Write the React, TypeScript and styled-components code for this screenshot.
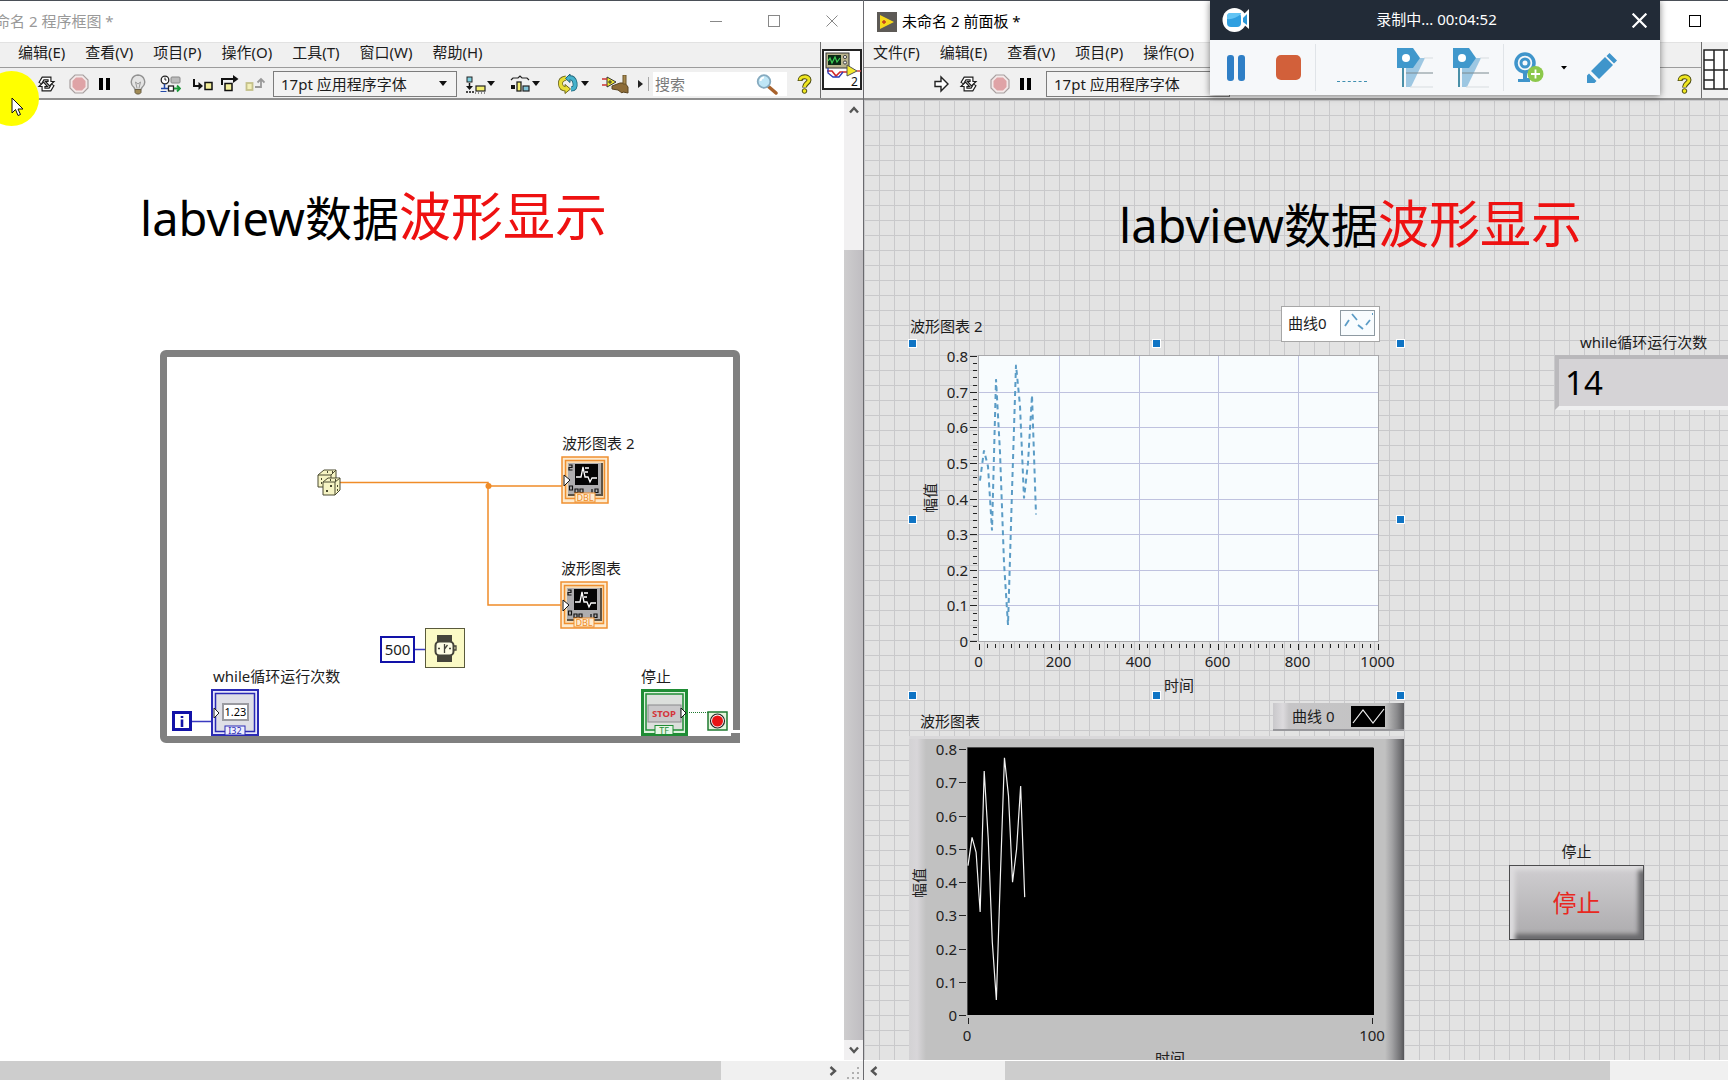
import React from "react";
import styled, { createGlobalStyle, css } from "styled-components";

const GlobalStyle = createGlobalStyle`
  * { box-sizing: border-box; }
  html, body, #root { height: 100%; margin: 0; }
  body {
    overflow: hidden;
    background: #f0f0f0;
    color: #1c1c1c;
    font: 15px/20px "Noto Sans", "Noto Sans CJK SC", sans-serif;
  }
  button, input, select { font: inherit; color: inherit; }
  svg { display: block; flex: none; }
  svg text { font-family: "Noto Sans", "Noto Sans CJK SC", sans-serif; }
`;

/* ---------- window frame ---------- */

const Desktop = styled.div`
  position: relative;
  display: grid;
  grid-template-columns: minmax(0, 1fr) minmax(0, 1fr);
  height: 100vh;
  overflow: hidden;
`;

const Window = styled.section<{ $edge?: boolean }>`
  display: grid;
  grid-template-rows: 42px 58px minmax(0, 1fr) 20px;
  min-width: 0;
  border-right: ${(p) => (p.$edge ? "1px solid #6a6a6e" : "0")};
`;

const TitleBar = styled.header`
  display: flex;
  align-items: center;
  border-top: 1px solid #4a4f57;
  background: #fff;
  overflow: hidden;
`;

const TitleText = styled.h1<{ $muted?: boolean }>`
  flex: 1;
  margin: 0 0 0 ${(p) => (p.$muted ? "-5px" : "5px")};
  padding-bottom: 2px;
  font-size: 15px;
  font-weight: 400;
  line-height: 20px;
  white-space: nowrap;
  color: ${(p) => (p.$muted ? "#999" : "#000")};
`;

const AppIcon = styled.span`
  margin-left: 13px;
`;

const FrameButton = styled.button<{ $muted?: boolean }>`
  display: grid;
  place-items: center;
  width: 58px;
  height: 42px;
  padding: 0 0 2px;
  border: 0;
  background: none;
  color: ${(p) => (p.$muted ? "#888" : "#000")};
`;

const FrameButtons = styled.div<{ $inset?: boolean }>`
  display: flex;
  margin-right: ${(p) => (p.$inset ? "4px" : "2px")};
`;

const Head = styled.div<{ $pane: number }>`
  display: grid;
  grid-template-columns: minmax(0, 1fr) ${(p) => p.$pane}px;
  border-bottom: 2px solid #8f8f8f;
  background: #f0f0f0;
`;

const HeadBars = styled.div`
  display: grid;
  grid-template-rows: 26px 30px;
  min-width: 0;
`;

const MenuBar = styled.nav<{ $start: number }>`
  display: flex;
  align-items: flex-start;
  gap: 20px;
  padding-left: ${(p) => p.$start}px;
  border-top: 1px solid #e2e2e2;
  border-bottom: 1px solid #9c9c9c;
  overflow: hidden;
`;

const MenuItem = styled.button`
  flex: none;
  padding: 0;
  border: 0;
  background: none;
  line-height: 18px;
  white-space: nowrap;
`;

const ToolBar = styled.div<{ $start: number }>`
  display: flex;
  align-items: center;
  padding: 2px 0 0 ${(p) => p.$start}px;
  overflow: hidden;
`;

const ToolButton = styled.button<{ $gap: number }>`
  flex: none;
  margin: 0 0 0 ${(p) => p.$gap}px;
  padding: 0;
  border: 0;
  background: none;
`;

const Spacer = styled.div`
  flex: 1;
`;

const FontBox = styled.label<{ $gap: number }>`
  position: relative;
  flex: none;
  width: 184px;
  margin-left: ${(p) => p.$gap}px;
`;

const FontSelect = styled.select`
  display: block;
  width: 100%;
  height: 26px;
  padding: 0 7px 1px;
  border: 1px solid #7c7c7c;
  border-radius: 0;
  outline: 0;
  background: #f3f3f3;
  appearance: none;
`;

const FontCaret = styled.span`
  position: absolute;
  right: 10px;
  top: 10px;
  pointer-events: none;
`;

const SearchMark = styled.span`
  margin-left: 9px;
  padding-right: 4px;
  border-right: 1px solid #a8a8a8;
`;

const SearchBox = styled.label`
  display: flex;
  flex: none;
  align-items: center;
  width: 134px;
  height: 24px;
  margin-left: 4px;
  padding: 0 9px 0 2px;
  background: #fff;
`;

const SearchInput = styled.input`
  flex: 1;
  min-width: 0;
  padding: 0;
  border: 0;
  outline: 0;
  background: none;
  &::placeholder { color: #7a7a7a; opacity: 1; }
`;

const Pane = styled.div`
  display: flex;
  align-items: flex-start;
  padding: 7px 0 0 1px;
  border-left: 1px solid #6e6e6e;
  overflow: hidden;
`;

/* ---------- work areas ---------- */

const Work = styled.div<{ $bar?: boolean }>`
  display: grid;
  grid-template-columns: minmax(0, 1fr) ${(p) => (p.$bar ? "19px" : "")};
  min-height: 0;
`;

const canvasBase = css`
  position: relative;
  overflow: hidden;
`;

const Diagram = styled.main`
  ${canvasBase}
  background: #fff;
`;

const Panel = styled.main`
  ${canvasBase}
  background-color: #e3e3e3;
  background-image:
    linear-gradient(#c4c4c4, #c4c4c4),
    linear-gradient(to right, #c9c9cb 1px, transparent 1px),
    linear-gradient(to bottom, #c9c9cb 1px, transparent 1px);
  background-size: 100% 1px, 15px 15px, 15px 15px;
  background-position: 0 75px, 0 0, 0 0;
  background-repeat: no-repeat, repeat, repeat;
`;

const Item = styled.div<{ $x: number; $y: number }>`
  position: absolute;
  left: ${(p) => p.$x}px;
  top: ${(p) => p.$y}px;
`;

const Caption = styled.span`
  display: block;
  line-height: 20px;
  white-space: nowrap;
`;

const Headline = styled.h2<{ $accent: number }>`
  margin: 0;
  font-size: 47px;
  font-weight: 400;
  line-height: 60px;
  white-space: nowrap;
  color: #000;
  em {
    font-style: normal;
    font-size: ${(p) => p.$accent}px;
    color: #ee1111;
  }
`;

const Loop = styled.div`
  width: 580px;
  height: 393px;
  border: 7px solid #808080;
  border-radius: 6px;
`;

const Constant = styled.div`
  width: 35px;
  height: 27px;
  border: 2px solid #1212a8;
  background: #fff;
  line-height: 22px;
  text-align: center;
`;

/* ---------- scroll bars ---------- */

const VBar = styled.div`
  display: grid;
  grid-template-rows: 20px 130px minmax(0, 1fr) 20px;
  justify-items: center;
  align-items: center;
  background: #f1f0f1;
`;

const VThumb = styled.div`
  grid-row: 3;
  align-self: stretch;
  width: 100%;
  background: linear-gradient(to right, #cecdce, #bfbdc1);
`;

const VEnd = styled.span`
  grid-row: 4;
`;

const HBar = styled.div`
  display: flex;
  align-items: center;
  border-top: 1px solid #fff;
  background: #f0f0f0;
`;

const HThumb = styled.div<{ $share: number }>`
  flex: 0 0 ${(p) => p.$share}%;
  align-self: stretch;
  background: #cdcdcd;
`;

const ArrowCell = styled.span<{ $w: number }>`
  display: grid;
  place-items: center;
  flex: 0 0 ${(p) => p.$w}px;
`;

/* ---------- front panel controls ---------- */

const Legend = styled.div<{ $flat?: boolean }>`
  display: flex;
  align-items: center;
  justify-content: space-between;
  ${(p) =>
    p.$flat
      ? css`
          width: 99px;
          height: 36px;
          padding: 0 4px 2px 6px;
          border: 1px solid #a6a6a6;
          background: #fff;
        `
      : css`
          width: 131px;
          height: 28px;
          padding: 0 19px 0 19px;
          border-bottom: 2px solid #98989c;
          background: linear-gradient(to right, #c9c8cb, #dcdadd 10px, #c6c5c7 16px, #c3c3c3 112px, #8a8a8c 124px, #5f5f62);
        `}
`;

const Bezel = styled.div`
  width: 495px;
  height: 350px;
  border-top: 3px solid #d9d8da;
  background: linear-gradient(to right, #d3d2d4, #d8d6d9 8px, #c1c1c1 17px, #c1c1c1 476px, #a2a2a4 483px, #6d6d70 492px, #555558);
`;

const CountLabel = styled.label`
  display: block;
  padding-left: 25px;
  line-height: 26px;
  white-space: nowrap;
`;

const CountField = styled.input`
  display: block;
  width: 220px;
  height: 55px;
  padding: 0 0 0 6px;
  border: 4px solid;
  border-color: #b9b8bb #e9e9e9 #efeff0 #bab9bc;
  border-radius: 0;
  outline: 0;
  background: #d5d3d6;
  font-size: 33px;
  color: #000;
`;

const StopGroup = styled.div`
  display: grid;
  justify-items: center;
  gap: 4px;
`;

const StopButton = styled.button`
  width: 135px;
  height: 75px;
  padding: 0;
  border: 1px solid #4c4c4e;
  border-radius: 0;
  background: linear-gradient(#d0ced1, #acabad);
  box-shadow: inset 5px 4px 4px #dddcde, inset -5px -5px 4px #6b6b6e;
  font-size: 24px;
  color: #e8281f;
`;

/* ---------- recorder ---------- */

const Recorder = styled.aside`
  position: absolute;
  top: 0;
  right: 68px;
  width: 450px;
  background: #f6f8fa;
  box-shadow: 0 1px 7px rgba(0, 0, 0, 0.5);
`;

const RecorderHead = styled.header`
  display: grid;
  grid-template-columns: 28px 1fr 15px;
  align-items: center;
  height: 40px;
  padding: 0 13px 0 12px;
  background: #222b37;
  color: #fff;
`;

const RecorderTime = styled.span`
  padding: 0 9px 2px 0;
  text-align: center;
`;

const RecorderBody = styled.div`
  display: flex;
  align-items: center;
  height: 55px;
  padding-left: 17px;
`;

const RecButton = styled.button<{ $gap: number }>`
  flex: none;
  margin: 0 0 0 ${(p) => p.$gap}px;
  padding: 0;
  border: 0;
  background: none;
`;

const RecRule = styled.span<{ $gap: number }>`
  width: 1px;
  height: 47px;
  margin-left: ${(p) => p.$gap}px;
  background: #e0e4e8;
`;

const Level = styled.span`
  align-self: flex-end;
  width: 30px;
  margin: 0 0 13px 21px;
  border-bottom: 1px dashed #3f8fb0;
`;

const Highlight = styled.div`
  position: absolute;
  left: -16px;
  top: 71px;
  width: 55px;
  height: 55px;
  border-radius: 50%;
  background: #ffff00;
`;

const Pointer = styled.div`
  position: absolute;
  left: 11px;
  top: 97px;
`;

/* ---------- icons ---------- */

const Caret = () => (
  <svg width="8" height="5"><path d="M0 0h8L4 5z" fill="#111" /></svg>
);

const ContinuousIcon = () => (
  <svg width="21" height="18" viewBox="0 0 21 18">
    <g fill="none" stroke="#1c1c1c" strokeWidth="4">
      <path d="M4 8.500L7 3.500h6.500V7" /><path d="M17 9.500L14 14.500H7.500V11" />
    </g>
    <g fill="#fff" stroke="#1c1c1c" strokeWidth="1.200">
      <path d="M9.500 6.500h8.500L13.500 11z" /><path d="M3 11.500h8.500L7.500 7z" />
    </g>
    <g fill="none" stroke="#fff" strokeWidth="1.700">
      <path d="M4.500 7.700L7 3.500h6.500V8" /><path d="M16.500 10.300L14 14.500H7.500V10" />
    </g>
  </svg>
);

const RunIcon = () => (
  <svg width="15" height="18" viewBox="0 0 15 18"><path d="M1 6.500h6V2l7 7-7 7v-4.500H1z" fill="#fff" stroke="#222" strokeWidth="1.400" /></svg>
);

const AbortIcon = () => (
  <svg width="20" height="20" viewBox="0 0 20 20">
    <path d="M6 1h8l5 5v8l-5 5H6l-5-5V6z" fill="#f3e9e9" stroke="#a8a0a0" strokeWidth="1.200" />
    <path d="M7 3.500h6L16.500 7v6L13 16.500H7L3.500 13V7z" fill="#dfa3a6" />
  </svg>
);

const PauseIcon = () => (
  <svg width="14" height="14"><path d="M1 1h4v12H1zM8 1h4v12H8z" fill="#000" /></svg>
);

const BulbIcon = () => (
  <svg width="16" height="21" viewBox="0 0 16 21">
    <path d="M8 1a7 7 0 0 0-4 12.500l1 2h6l1-2A7 7 0 0 0 8 1z" fill="#e4e4e4" stroke="#929292" strokeWidth="1.400" />
    <path d="M5.500 8l1.500 6M10.500 8L9 14M5.500 8l2.500 2 2.500-2" fill="none" stroke="#999" />
    <path d="M5 15.500h6v3L9.500 20h-3L5 18.500z" fill="#a08a55" stroke="#6a6048" />
  </svg>
);

const RetainIcon = () => (
  <svg width="21" height="18" viewBox="0 0 21 18" fill="none" stroke="#222">
    <circle cx="5" cy="5" r="3.800" fill="#fff" strokeWidth="1.300" /><path d="M5 2.500V5h1.500" />
    <rect x="11" y="2" width="9" height="6" rx="1" fill="#bbb" stroke="#888" />
    <path d="M4.500 9v4M1 13.500h7" stroke="#2248a8" strokeWidth="1.500" /><path d="M0.500 16.500h6" stroke="#2248a8" />
    <rect x="8.500" y="11" width="5" height="5" fill="#fff" strokeWidth="1.300" />
    <path d="M14 13.500h6M17 10.500l3 3-3 3" stroke="#1b9a3a" strokeWidth="1.800" />
  </svg>
);

const StepIntoIcon = () => (
  <svg width="21" height="18" viewBox="0 0 21 18" fill="none" stroke="#111" strokeWidth="2">
    <path d="M2 4v7h6" /><path d="M6.500 7l4.500 4-4.500 4z" fill="#111" stroke="none" /><rect x="13" y="7.500" width="7" height="7" fill="#f4ef9a" strokeWidth="1.500" />
  </svg>
);

const StepOverIcon = () => (
  <svg width="19" height="18" viewBox="0 0 19 18" fill="none" stroke="#111" strokeWidth="2">
    <path d="M2 10V4h12" /><path d="M13 0l5.500 4L13 8z" fill="#111" stroke="none" /><rect x="5" y="8.500" width="7" height="7" fill="#f4ef9a" strokeWidth="1.500" />
  </svg>
);

const StepOutIcon = () => (
  <svg width="20" height="18" viewBox="0 0 20 18" fill="none" stroke="#999" strokeWidth="1.800">
    <rect x="1.500" y="8" width="6" height="7" fill="#f2efb8" stroke="#c4c08a" /><path d="M10 12h6V5M12.500 7.500L16 4l3.500 3.500" />
  </svg>
);

const AlignIcon = () => (
  <svg width="30" height="19" viewBox="0 0 30 19">
    <rect x="1" y="2" width="5" height="5" fill="#7fd0e0" stroke="#222" />
    <path d="M3.500 8v5" stroke="#111" strokeWidth="1.500" /><path d="M0 11h7l-3.500 4z" fill="#111" /><path d="M0 17h8" stroke="#111" strokeWidth="1.500" strokeDasharray="2 1" />
    <rect x="10" y="11" width="9" height="5" fill="#f4ef70" stroke="#222" strokeWidth="1.200" />
    <path d="M9 18h12" stroke="#222" strokeDasharray="1 2" /><path d="M21 6h8l-4 5z" fill="#111" />
  </svg>
);

const DistributeIcon = () => (
  <svg width="30" height="19" viewBox="0 0 30 19">
    <path d="M1 5l2-2h5l2-2 2 2h5l2 2" fill="none" stroke="#222" strokeWidth="1.200" />
    <path d="M1 10h4v4H1z" fill="#111" />
    <rect x="7" y="7" width="4" height="9" fill="#f4ef70" stroke="#222" strokeWidth="1.300" />
    <rect x="13" y="11" width="6" height="5" fill="#7fc3d8" stroke="#222" strokeWidth="1.200" /><path d="M22 6h8l-4 5z" fill="#111" />
  </svg>
);

const ReorderIcon = () => (
  <svg width="32" height="20" viewBox="0 0 32 20">
    <g fill="none" stroke="#6b6620" strokeWidth="5"><path d="M9 4Q3 5 3.500 10T9 15" /></g>
    <path d="M8 10.500l5.500 4.500L8 19.500z" fill="#e8de36" stroke="#6b6620" />
    <path d="M9.500 4Q3 5 3.500 10T9.500 15" fill="none" stroke="#e8de36" strokeWidth="3.400" />
    <g fill="none" stroke="#1e6478" strokeWidth="5"><path d="M12 4Q17 3 18 9T14 15" /></g>
    <path d="M13 0L8.500 4.500l4.500 4z" fill="#46b2cc" stroke="#1e6478" />
    <path d="M12 4Q17 3 18 9T14 15" fill="none" stroke="#46b2cc" strokeWidth="3.400" />
    <path d="M24 7h8l-4 5z" fill="#111" />
  </svg>
);

const CleanIcon = () => (
  <svg width="27" height="19" viewBox="0 0 27 19">
    <path d="M10 11l8-3h5l3 4v6l-5-1-1 1-4-3-6-1z" fill="#8d6c38" stroke="#5a4420" />
    <path d="M21 0h3v9h-3z" fill="#a88a50" stroke="#6b5528" />
    <path d="M5 2l9 5-9 5z" fill="#f2ea30" stroke="#333" /><path d="M0 4h5M0 10h5" stroke="#c33" strokeWidth="1.500" />
    <path d="M8 5v4M6 7h4" stroke="#333" />
  </svg>
);

const LensIcon = () => (
  <svg width="22" height="21" viewBox="0 0 22 21">
    <path d="M13 13l7 6" stroke="#a8622c" strokeWidth="3.500" strokeLinecap="round" />
    <circle cx="8" cy="7.500" r="6.300" fill="#bfe6f6" stroke="#86aabf" strokeWidth="1.800" />
    <path d="M4.500 7A4 4 0 0 1 8 3.500" stroke="#fff" strokeWidth="1.800" fill="none" />
  </svg>
);

const HelpIcon = () => (
  <svg width="15" height="20" viewBox="0 0 15 20">
    <path d="M3 7C3 1.500 12 1.500 12 6c0 3-4.500 3.500-4.500 7.500" fill="none" stroke="#4c4a10" strokeWidth="5" />
    <path d="M3 6.200C3 1.800 12 1.800 12 6c0 3-4.500 3.500-4.500 7" fill="none" stroke="#efe620" strokeWidth="3" />
    <circle cx="7.500" cy="17" r="2.300" fill="#efe620" stroke="#4c4a10" />
  </svg>
);

const ViIcon = () => (
  <svg width="40" height="41" viewBox="0 0 40 41">
    <rect x="1" y="1" width="38" height="39" fill="#fff" stroke="#222" strokeWidth="2" />
    <rect x="4" y="4" width="23" height="15" fill="#b9b38c" stroke="#333" />
    <rect x="6" y="6" width="13" height="10" fill="#0b2a14" />
    <path d="M6 12l2-3 2 5 3-6 2 5 3-4" fill="none" stroke="#3ecb55" strokeWidth="1.200" />
    <circle cx="23" cy="8" r="1.600" fill="#eee" stroke="#444" /><circle cx="23" cy="13.500" r="1.600" fill="#eee" stroke="#444" />
    <path d="M5 22h5l4 5 4-4h9" fill="none" stroke="#d02828" strokeWidth="1.600" />
    <path d="M6 19v5l5 4h6l4-5" fill="none" stroke="#2a3ab8" strokeWidth="1.300" />
    <path d="M25 16l10 6-10 5z" fill="#f4ea2a" stroke="#555" /><path d="M35 22h4" stroke="#c44" strokeWidth="1.500" />
    <text x="29" y="37" fontSize="12" fill="#111">2</text>
  </svg>
);

const ConnectorIcon = () => (
  <svg width="40" height="41" viewBox="0 0 40 41" fill="#fff" stroke="#222" strokeWidth="1.500">
    <rect x="1" y="1" width="38" height="39" /><path d="M11 1v39M21 1v39M30 1v39M1 11h10M1 21h38M1 31h10M30 11h10M30 31h10" />
  </svg>
);

const LabviewIcon = () => (
  <svg width="20" height="20"><rect width="20" height="20" fill="#5d5a56" /><path d="M3 3l14 7-14 7z" fill="#f6d91c" /><path d="M5 10h4M7 8v4" stroke="#c23a1c" strokeWidth="1.400" /></svg>
);

const Chevron = ({ turn }: { turn: number }) => (
  <svg width="12" height="12" viewBox="0 0 12 12"><path d="M2 8.500L6 4l4 4.500" transform={`rotate(${turn} 6 6)`} fill="none" stroke="#555" strokeWidth="2.400" /></svg>
);

const CloseIcon = ({ size, weight }: { size: number; weight: number }) => (
  <svg width={size} height={size} viewBox="0 0 12 12"><path d="M0.500 0.500l11 11M11.500 0.500l-11 11" stroke="currentColor" strokeWidth={weight} /></svg>
);

const MaxIcon = () => (
  <svg width="12" height="12"><rect x="0.500" y="0.500" width="11" height="11" fill="none" stroke="currentColor" /></svg>
);

const MinIcon = () => (
  <svg width="12" height="12"><path d="M0 6.500h12" stroke="currentColor" /></svg>
);

const CameraLogo = () => (
  <svg width="28" height="26" viewBox="0 0 28 26">
    <circle cx="12.500" cy="13" r="12" fill="#fff" /><path d="M20 9l7-7v20l-7-6z" fill="#fff" />
    <rect x="5" y="6" width="14" height="14" rx="4" fill="#2f9fe0" /><path d="M5 12q7 1 14-5v-1H8q-3 0-3 4z" fill="#62c4f4" />
    <path d="M21 11l4-4v11l-4-3z" fill="#2a97d8" />
  </svg>
);

const MarkerIcon = () => (
  <svg width="37" height="40" viewBox="0 0 37 40">
    <path d="M14 10h14L14 39H9V20z" fill="#9dc7e2" /><path d="M0 0h16l7 10-7 10H0z" fill="#4098cc" />
    <circle cx="9" cy="10" r="4" fill="#fff" /><path d="M6 20v19" stroke="#4a90a8" strokeWidth="2" />
    <path d="M9 25h27" stroke="#7a8a90" /><path d="M27 10h9M13 39h23" stroke="#d8dde0" />
  </svg>
);

const WebcamIcon = () => (
  <svg width="30" height="31" viewBox="0 0 30 31">
    <circle cx="11" cy="11" r="9" fill="none" stroke="#3f95cb" strokeWidth="3.500" /><circle cx="11" cy="11" r="4" fill="none" stroke="#3f95cb" strokeWidth="3" />
    <path d="M9 21h4v5h3v4H4v-3h5z" fill="#3f95cb" /><circle cx="21.500" cy="22" r="8" fill="#8cc84b" />
    <path d="M21.500 17.500v9M17 22h9" stroke="#fff" strokeWidth="1.800" />
  </svg>
);

const PencilIcon = () => (
  <svg width="30" height="30" viewBox="0 0 30 30" fill="#3f95cb">
    <path d="M0 22.500V30h7.500l2-2-7.500-7.500zM4 18L18 4l8 8-14 14zM19.500 3l3-3L30 7.500l-3 3z" />
  </svg>
);

/* ---------- block diagram terminals ---------- */

const ChartTerminal = () => (
  <svg width="48" height="48" viewBox="0 0 48 48">
    <rect x="1" y="1" width="46" height="46" fill="#fdebd0" stroke="#ef9030" strokeWidth="1.500" />
    <rect x="4.500" y="4.500" width="39" height="38" fill="#f8dcb4" stroke="#ef9030" strokeWidth="1.500" />
    <rect x="7" y="7" width="34" height="32" fill="#aeadaf" /><path d="M41 7v32H7" fill="none" stroke="#5c5346" strokeWidth="2" />
    <rect x="14" y="8" width="23" height="21" fill="#050505" />
    <path d="M15 21h5l2-10 2 10h3l2 5 2-4h5M24 12h4M24 16h3" fill="none" stroke="#fff" strokeWidth="1.300" />
    <path d="M8 9h3v2.500H8V14h3.500M8.500 30h3v4h-3zM14 33h3v3.500h-3zM19 33h3v3.500h-3zM31 33v3.500M34 33h3v3.500h-3z" fill="none" stroke="#111" strokeWidth="1.200" />
    <path d="M3 19l6 5-6 6z" fill="#fff" stroke="#111" />
    <rect x="14" y="37" width="20" height="9" fill="#fdebd0" stroke="#ef9030" />
    <text x="24" y="45" fontSize="9" textAnchor="middle" fill="#ef8c26">DBL</text>
  </svg>
);

const CountTerminal = () => (
  <svg width="48" height="47" viewBox="0 0 48 47">
    <rect x="1" y="1" width="46" height="45" fill="#e6e6fb" stroke="#2a2ab4" strokeWidth="2" />
    <rect x="4.500" y="4.500" width="39" height="38" fill="#dfdfe6" stroke="#2a2ab4" strokeWidth="1.500" />
    <rect x="12" y="15" width="25" height="16" fill="#fff" stroke="#9a9aa0" strokeWidth="2" />
    <text x="24.500" y="27" fontSize="11" textAnchor="middle">1.23</text>
    <path d="M3 19l5 5-5 5z" fill="#fff" stroke="#222" />
    <rect x="14" y="37" width="20" height="9" fill="#eef" stroke="#2a2ab4" /><text x="24" y="45" fontSize="9" textAnchor="middle" fill="#2a2ab4">I32</text>
  </svg>
);

const StopTerminal = () => (
  <svg width="47" height="47" viewBox="0 0 47 47">
    <rect x="1.500" y="1.500" width="44" height="44" fill="#dff2df" stroke="#1f8c35" strokeWidth="3" />
    <rect x="5" y="5" width="37" height="36" fill="#dcdfdc" stroke="#1f8c35" strokeWidth="1.500" />
    <rect x="7" y="16" width="33" height="17" fill="#c9c8ca" stroke="#8a8a8c" />
    <text x="23" y="28" fontSize="9.500" fontWeight="700" textAnchor="middle" fill="#d4343a">STOP</text>
    <path d="M40 19l5 5-5 5z" fill="#fff" stroke="#111" />
    <rect x="14" y="36.500" width="18" height="9" fill="#e6f6e6" stroke="#1f8c35" /><text x="23" y="44.500" fontSize="9" textAnchor="middle" fill="#1f8c35">TF</text>
  </svg>
);

const IterationTerminal = () => (
  <svg width="20" height="20"><rect x="1.500" y="1.500" width="17" height="17" fill="#fff" stroke="#1212a8" strokeWidth="3" /><path d="M10 5v2M10 8.500V16" fill="none" stroke="#1212a8" strokeWidth="2.600" /></svg>
);

const ConditionTerminal = () => (
  <svg width="21" height="20"><rect x="1" y="1" width="19" height="18" fill="#e4f6dc" stroke="#1f7a30" strokeWidth="1.500" /><circle cx="10.500" cy="10" r="7" fill="#fff" stroke="#222" strokeWidth="1.200" /><circle cx="10.500" cy="10" r="5.500" fill="#e81414" /></svg>
);

const DiceIcon = () => (
  <svg width="25" height="27" viewBox="0 0 25 27" fill="#f6f4c4" stroke="#4a4a30" strokeLinejoin="round">
    <path d="M1 6l6-5h12v13l-4 4H1z" /><path d="M1 6h13l5-5M14 6v12" />
    <path d="M6 13l5-4h12v12l-5 5H6z" /><path d="M6 13h12l5-4M18 13v13" />
    <path d="M10 3h1M15 3h1M4 10h1M4 14h1M13 11h1M18 11h1M9 22h2M13 17h2M20 17h1M20 21h1" strokeWidth="1.800" />
  </svg>
);

const WatchIcon = () => (
  <svg width="40" height="40" viewBox="0 0 40 40">
    <rect x="0.500" y="0.500" width="39" height="39" fill="#fbfac6" stroke="#5a5a3c" />
    <path d="M12 7h15v8H12zM12 26h15v8H12z" fill="#45443a" />
    <rect x="10.500" y="13.500" width="18" height="14" rx="4" fill="#fdfce4" stroke="#45443a" strokeWidth="2" />
    <path d="M29 18h2v4h-2M19.500 16v9M19.500 21l3-4M13 20.500h2M24 20.500h2" fill="none" stroke="#45443a" strokeWidth="1.300" />
  </svg>
);

const Wires = () => (
  <svg width="760" height="650" viewBox="0 0 760 650" fill="none">
    <path d="M340 382.500h148v122.500h73M488 386h74" stroke="#f08c28" strokeWidth="1.500" /><circle cx="488.500" cy="386" r="3" fill="#f08c28" />
    <path d="M415 549.500h11M191 621.500h21" stroke="#3a3ac0" strokeWidth="1.300" />
    <path d="M687 612.500h21" stroke="#1f7a30" strokeDasharray="1 1" />
    <path d="M732 630h9v3h-9z" fill="#fff" /><path d="M731 633h9v10h-9z" fill="#808080" />
  </svg>
);

/* ---------- charts ---------- */

const SAMPLES = [0.45, 0.535, 0.49, 0.31, 0.735, 0.53, 0.22, 0.045, 0.42, 0.775, 0.66, 0.4, 0.5, 0.69, 0.355];
const LEVELS = [0.8, 0.7, 0.6, 0.5, 0.4, 0.3, 0.2, 0.1, 0];

const trace = (x0: number, dx: number, y0: number, perUnit: number) =>
  SAMPLES.map((v, i) => `${x0 + i * dx},${y0 - v * perUnit}`).join(" ");

const LightChart = () => {
  const left = 71, top = 17, width = 399, height = 285;
  const bottom = top + height;
  const yOf = (v: number) => Math.round(bottom - (v / 0.8) * height) + 0.5;
  const xOf = (v: number) => left + Math.round((v * width) / 1000) + 0.5;
  return (
    <svg width="500" height="362" role="img" aria-label="波形图表 2" fill="#222" fontSize="15">
      <rect x={left - 0.5} y={top - 0.5} width={width + 1} height={height + 1} fill="#f8fcfe" stroke="#a9a9ac" />
      {LEVELS.slice(1, -1).map((v) => <path key={v} d={`M${left} ${yOf(v)}h${width}`} stroke="#bfc2df" />)}
      {[200, 400, 600, 800].map((v) => <path key={v} d={`M${xOf(v)} ${top}v${height}`} stroke="#bfc2df" />)}
      {Array.from({ length: 41 }, (_, i) => {
        const y = Math.round(bottom - (i * height) / 40) + 0.5;
        return <path key={i} d={`M${i % 5 ? 65 : 62} ${y}H69`} stroke="#222" />;
      })}
      {Array.from({ length: 51 }, (_, i) => (
        <path key={i} d={`M${xOf(i * 20)} 305v${i % 10 ? 4 : 6}`} stroke="#222" />
      ))}
      {LEVELS.map((v) => <text key={v} x="60" y={yOf(v) + 5.5} textAnchor="end">{v}</text>)}
      {[0, 200, 400, 600, 800, 1000].map((v) => <text key={v} x={xOf(v) - 1} y="328" textAnchor="middle">{v}</text>)}
      <text x="271" y="352" textAnchor="middle">时间</text>
      <text transform="translate(28 159) rotate(-90)" textAnchor="middle">幅值</text>
      <polyline points={trace(left + 1, 4, bottom, height / 0.8)} fill="none" stroke="#5b9cc6" strokeWidth="2" strokeDasharray="5 4" />
      {[4.5, 248.5, 492.5].map((x) =>
        [4.5, 180.5, 356.5].map((y) =>
          x === 248.5 && y === 180.5 ? null : (
            <rect key={`${x}-${y}`} x={x - 4} y={y - 4} width="8" height="8" fill="#0f74c4" stroke="#fff" />
          )
        )
      )}
    </svg>
  );
};

const DarkChart = () => {
  const left = 59, top = 9, height = 267;
  const bottom = top + height;
  return (
    <svg width="495" height="340" role="img" aria-label="波形图表" fill="#222" fontSize="15">
      <rect x={left} y={top} width="406" height={height} fill="#000" />
      <path d={`M${left - 0.5} ${bottom}V${top - 0.5}h406`} fill="none" stroke="#4a4a4a" />
      {LEVELS.map((v) => {
        const y = Math.round(bottom - (v / 0.8) * 266) + 0.5;
        return (
          <g key={v}>
            <path d={`M50 ${y}h7`} stroke="#222" />
            <text x="48" y={y + 5} textAnchor="end">{v}</text>
          </g>
        );
      })}
      <path d={`M${left + 0.5} 279v6M463.500 279v6`} stroke="#222" />
      <text x="58" y="302" textAnchor="middle">0</text>
      <text x="463" y="302" textAnchor="middle">100</text>
      <text x="261" y="325" textAnchor="middle">时间</text>
      <text transform="translate(16 144) rotate(-90)" textAnchor="middle">幅值</text>
      <polyline points={trace(left, 4.05, bottom, 332)} fill="none" stroke="#f2f2f2" strokeWidth="1.200" />
    </svg>
  );
};

const FontPicker = ({ gap }: { gap: number }) => (
  <FontBox $gap={gap}>
    <FontSelect aria-label="字体"><option>17pt 应用程序字体</option></FontSelect>
    <FontCaret><Caret /></FontCaret>
  </FontBox>
);

const DiagramWindow = () => (
  <Window $edge>
    <TitleBar>
      <TitleText $muted>命名 2 程序框图 *</TitleText>
      <FrameButtons>
        <FrameButton $muted aria-label="最小化"><MinIcon /></FrameButton>
        <FrameButton $muted aria-label="最大化"><MaxIcon /></FrameButton>
        <FrameButton $muted aria-label="关闭"><CloseIcon size={12} weight={1} /></FrameButton>
      </FrameButtons>
    </TitleBar>
    <Head $pane={43}>
      <HeadBars>
        <MenuBar $start={18}>
          {["编辑(E)", "查看(V)", "项目(P)", "操作(O)", "工具(T)", "窗口(W)", "帮助(H)"].map((m) => <MenuItem key={m}>{m}</MenuItem>)}
        </MenuBar>
        <ToolBar $start={36}>
          <ToolButton $gap={0} aria-label="连续运行"><ContinuousIcon /></ToolButton>
          <ToolButton $gap={12} aria-label="中止"><AbortIcon /></ToolButton>
          <ToolButton $gap={9} aria-label="暂停"><PauseIcon /></ToolButton>
          <ToolButton $gap={18} aria-label="高亮显示"><BulbIcon /></ToolButton>
          <ToolButton $gap={14} aria-label="保存连线值"><RetainIcon /></ToolButton>
          <ToolButton $gap={11} aria-label="步入"><StepIntoIcon /></ToolButton>
          <ToolButton $gap={7} aria-label="步过"><StepOverIcon /></ToolButton>
          <ToolButton $gap={6} aria-label="步出"><StepOutIcon /></ToolButton>
          <FontPicker gap={8} />
          <ToolButton $gap={9} aria-label="对齐"><AlignIcon /></ToolButton>
          <ToolButton $gap={14} aria-label="分布"><DistributeIcon /></ToolButton>
          <ToolButton $gap={17} aria-label="重新排序"><ReorderIcon /></ToolButton>
          <ToolButton $gap={13} aria-label="整理"><CleanIcon /></ToolButton>
          <SearchMark><svg width="6" height="14"><path d="M0 3l5 4-5 4z" fill="#222" /></svg></SearchMark>
          <SearchBox>
            <SearchInput placeholder="搜索" aria-label="搜索" />
            <LensIcon />
          </SearchBox>
          <ToolButton $gap={10} aria-label="即时帮助"><HelpIcon /></ToolButton>
        </ToolBar>
      </HeadBars>
      <Pane><ViIcon /></Pane>
    </Head>
    <Work $bar>
      <Diagram>
        <Item $x={140} $y={86}><Headline $accent={52}>labview数据<em>波形显示</em></Headline></Item>
        <Item $x={160} $y={250}><Loop /></Item>
        <Item $x={0} $y={0}><Wires /></Item>
        <Item $x={317} $y={369}><DiceIcon /></Item>
        <Item $x={562} $y={333}><Caption>波形图表 2</Caption></Item>
        <Item $x={561} $y={356}><ChartTerminal /></Item>
        <Item $x={561} $y={458}><Caption>波形图表</Caption></Item>
        <Item $x={560} $y={481}><ChartTerminal /></Item>
        <Item $x={380} $y={536}><Constant>500</Constant></Item>
        <Item $x={425} $y={528}><WatchIcon /></Item>
        <Item $x={213} $y={566}><Caption>while循环运行次数</Caption></Item>
        <Item $x={211} $y={589}><CountTerminal /></Item>
        <Item $x={172} $y={611}><IterationTerminal /></Item>
        <Item $x={641} $y={566}><Caption>停止</Caption></Item>
        <Item $x={641} $y={589}><StopTerminal /></Item>
        <Item $x={707} $y={611}><ConditionTerminal /></Item>
      </Diagram>
      <VBar>
        <Chevron turn={0} />
        <VThumb />
        <VEnd><Chevron turn={180} /></VEnd>
      </VBar>
    </Work>
    <HBar>
      <HThumb $share={83.6} />
      <Spacer />
      <ArrowCell $w={20}><Chevron turn={90} /></ArrowCell>
      <ArrowCell $w={20}>
        <svg width="12" height="18" fill="#b0b0b0"><path d="M10 5h2v2h-2zM10 10h2v2h-2zM5 10h2v2H5zM10 15h2v2h-2zM5 15h2v2H5zM0 15h2v2H0z" /></svg>
      </ArrowCell>
    </HBar>
  </Window>
);

const PanelWindow = () => (
  <Window>
    <TitleBar>
      <AppIcon><LabviewIcon /></AppIcon>
      <TitleText>未命名 2 前面板 *</TitleText>
      <FrameButtons $inset>
        <FrameButton aria-label="最大化"><MaxIcon /></FrameButton>
      </FrameButtons>
    </TitleBar>
    <Head $pane={27}>
      <HeadBars>
        <MenuBar $start={9}>
          {["文件(F)", "编辑(E)", "查看(V)", "项目(P)", "操作(O)"].map((m) => <MenuItem key={m}>{m}</MenuItem>)}
        </MenuBar>
        <ToolBar $start={70}>
          <ToolButton $gap={0} aria-label="运行"><RunIcon /></ToolButton>
          <ToolButton $gap={9} aria-label="连续运行"><ContinuousIcon /></ToolButton>
          <ToolButton $gap={11} aria-label="中止"><AbortIcon /></ToolButton>
          <ToolButton $gap={9} aria-label="暂停"><PauseIcon /></ToolButton>
          <FontPicker gap={13} />
          <Spacer />
          <ToolButton $gap={0} aria-label="即时帮助"><HelpIcon /></ToolButton>
          <svg width="9" height="1" />
        </ToolBar>
      </HeadBars>
      <Pane><ConnectorIcon /></Pane>
    </Head>
    <Work>
      <Panel>
        <Item $x={255} $y={93}><Headline $accent={51}>labview数据<em>波形显示</em></Headline></Item>
        <Item $x={46} $y={216}><Caption>波形图表 2</Caption></Item>
        <Item $x={417} $y={206}>
          <Legend $flat>
            曲线0
            <svg width="35" height="26"><rect x="0.500" y="0.500" width="34" height="25" fill="#f8fcfe" stroke="#8e9aa2" /><path d="M5 16l4-6M12 4l5 6M18 15l5 4M26 15l4-5M32 4h1" stroke="#5b9cc6" strokeWidth="1.800" fill="none" /></svg>
          </Legend>
        </Item>
        <Item $x={56} $y={611}><Caption>波形图表</Caption></Item>
        <Item $x={409} $y={603}>
          <Legend>
            曲线 0
            <svg width="34" height="21"><rect width="34" height="21" fill="#000" /><path d="M2 17L12 4l10 13L33 3" stroke="#eee" fill="none" strokeWidth="1.200" /></svg>
          </Legend>
        </Item>
        <Item $x={45} $y={636}><Bezel><DarkChart /></Bezel></Item>
        <Item $x={44} $y={239}><LightChart /></Item>
        <Item $x={691} $y={229}>
          <CountLabel htmlFor="count">while循环运行次数</CountLabel>
          <CountField id="count" value="14" readOnly />
        </Item>
        <Item $x={645} $y={741}>
          <StopGroup><Caption>停止</Caption><StopButton>停止</StopButton></StopGroup>
        </Item>
      </Panel>
    </Work>
    <HBar>
      <ArrowCell $w={20}><Chevron turn={270} /></ArrowCell>
      <svg width="121" height="1" />
      <HThumb $share={70} />
    </HBar>
  </Window>
);

export default function App() {
  return (
    <>
      <GlobalStyle />
      <Desktop>
        <DiagramWindow />
        <PanelWindow />
        <Recorder>
          <RecorderHead>
            <CameraLogo />
            <RecorderTime>录制中... 00:04:52</RecorderTime>
            <RecButton $gap={0} aria-label="关闭录制"><CloseIcon size={15} weight={1.8} /></RecButton>
          </RecorderHead>
          <RecorderBody>
            <RecButton $gap={0} aria-label="暂停录制"><svg width="18" height="26" fill="#2f7fc6"><rect width="7" height="26" rx="3" /><rect x="11" width="7" height="26" rx="3" /></svg></RecButton>
            <RecButton $gap={31} aria-label="停止录制"><svg width="25" height="25"><rect width="25" height="25" rx="5" fill="#d2603a" /></svg></RecButton>
            <RecRule $gap={14} />
            <Level />
            <RecButton $gap={30} aria-label="标记一"><MarkerIcon /></RecButton>
            <RecButton $gap={19} aria-label="标记二"><MarkerIcon /></RecButton>
            <RecRule $gap={13} />
            <RecButton $gap={10} aria-label="摄像头"><WebcamIcon /></RecButton>
            <RecButton $gap={17} aria-label="摄像头选项"><svg width="6" height="4"><path d="M0 0h6L3 3.500z" /></svg></RecButton>
            <RecButton $gap={20} aria-label="画笔"><PencilIcon /></RecButton>
          </RecorderBody>
        </Recorder>
        <Highlight />
        <Pointer>
          <svg width="13" height="20" viewBox="0 0 13 20"><path d="M1 1v15l3.500-3.500L7 18.500l2.500-1L7 12h5z" fill="#fff" stroke="#111" /></svg>
        </Pointer>
      </Desktop>
    </>
  );
}
